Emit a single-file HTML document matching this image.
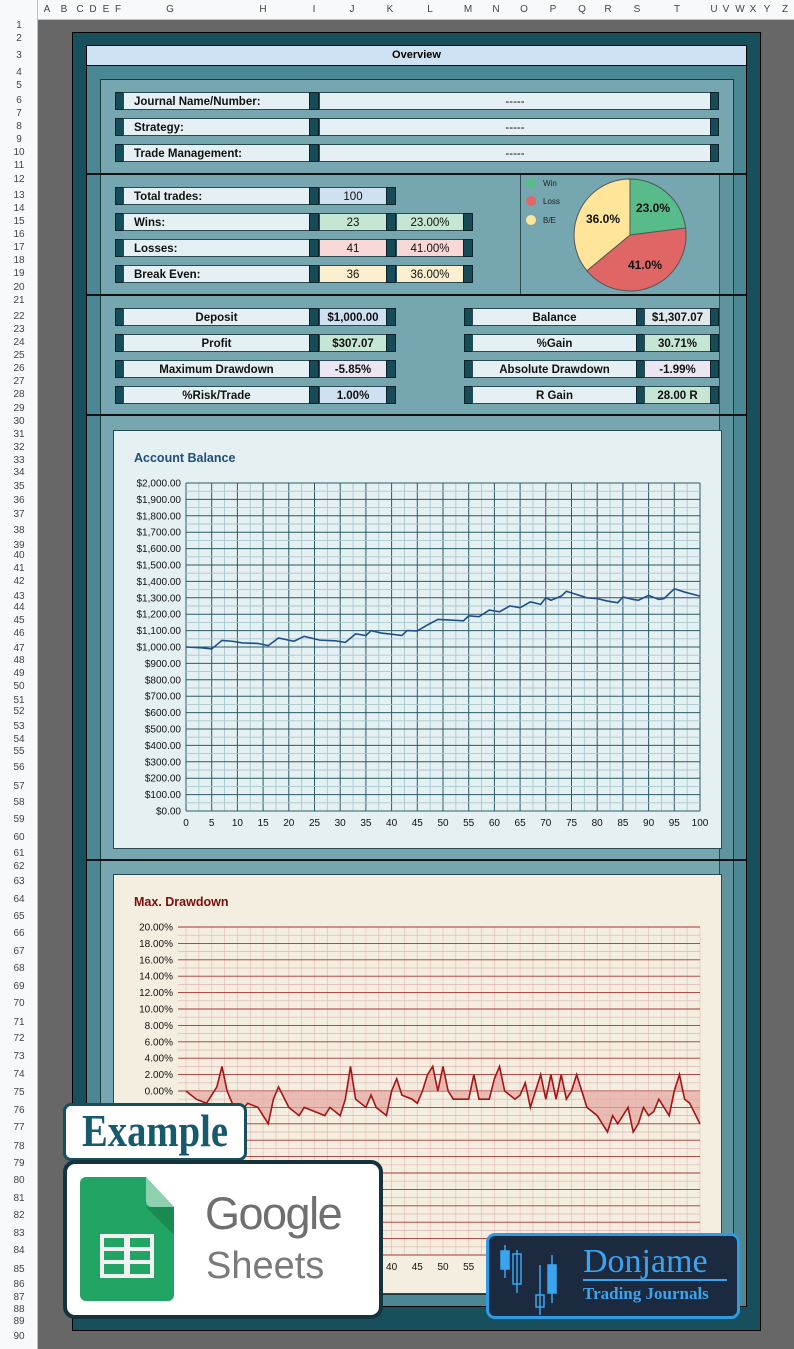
<!DOCTYPE html>
<html><head><meta charset="utf-8"><style>
*{margin:0;padding:0;box-sizing:border-box}
body{width:794px;height:1349px;position:relative;overflow:hidden;background:#676767;font-family:"Liberation Sans",Arial,sans-serif}
.a{position:absolute}
.rh{position:absolute;left:0;width:38px;text-align:center;font-size:10px;color:#444}
.ch{position:absolute;top:4px;font-size:10px;color:#444;transform:translateX(-50%)}
.d{position:absolute;background:#164b58;border:1px solid #0c2228}
.c{position:absolute;border:1px solid #2a4a52;font-size:11.5px;font-weight:bold;color:#111;height:18px;line-height:16px;padding-top:1px;text-align:center;white-space:nowrap}
.l{text-align:left;padding-left:10px}
</style></head><body>
<div class="a" style="left:0;top:0;width:794px;height:20px;background:#f8f9fa;border-bottom:1px solid #c0c0c0"></div>
<div class="a" style="left:0;top:0;width:38px;height:1349px;background:#f8f9fa;border-right:1px solid #c0c0c0"></div>
<div class="ch" style="left:47px">A</div><div class="ch" style="left:64px">B</div><div class="ch" style="left:80px">C</div><div class="ch" style="left:93px">D</div><div class="ch" style="left:106px">E</div><div class="ch" style="left:118px">F</div><div class="ch" style="left:170px">G</div><div class="ch" style="left:263px">H</div><div class="ch" style="left:314px">I</div><div class="ch" style="left:352px">J</div><div class="ch" style="left:390px">K</div><div class="ch" style="left:430px">L</div><div class="ch" style="left:468px">M</div><div class="ch" style="left:496px">N</div><div class="ch" style="left:524px">O</div><div class="ch" style="left:553px">P</div><div class="ch" style="left:582px">Q</div><div class="ch" style="left:608px">R</div><div class="ch" style="left:637px">S</div><div class="ch" style="left:677px">T</div><div class="ch" style="left:714px">U</div><div class="ch" style="left:726px">V</div><div class="ch" style="left:740px">W</div><div class="ch" style="left:753px">X</div><div class="ch" style="left:767px">Y</div><div class="ch" style="left:785px">Z</div>
<div id="rows"></div>
<script>
var ys=[26,39,56,73,86,101,114,127,140,153,166,180,196,209,222,235,248,261,274,288,301,317,330,343,356,369,382,395,409,422,435,448,461,473,487,501,515,531,546,556,569,582,597,608,621,634,649,661,674,687,701,712,727,740,752,768,787,803,820,838,854,867,882,900,917,934,952,969,987,1004,1023,1039,1057,1075,1093,1111,1128,1147,1164,1181,1199,1216,1234,1251,1270,1285,1298,1310,1322,1337];
var h='';ys.forEach(function(y,i){h+='<div class="rh" style="top:'+(y-6)+'px">'+(i+1)+'</div>'});document.getElementById('rows').innerHTML=h;
</script>
<div class="a" style="left:72px;top:32px;width:689px;height:1299px;background:#174f5d;border:1px solid #000"></div>
<div class="a" style="left:86px;top:45px;width:661px;height:1262px;background:#4c8794;border:1px solid #000"></div>
<div class="a" style="left:87px;top:46px;width:659px;height:20px;background:#cfe2f3;border-bottom:1px solid #000;font-size:11px;font-weight:bold;text-align:center;line-height:19px">Overview</div>
<div class="a" style="left:100px;top:79px;width:634px;height:1216px;background:#76a6b0;border:1px solid #1a3a40"></div>
<div class="a" style="left:719px;top:174px;width:14px;height:1120px;background:#5f939e;border-left:1px solid #2a4a52"></div>
<div class="a" style="left:87px;top:173px;width:659px;height:2px;background:#111"></div>
<div class="a" style="left:87px;top:294px;width:659px;height:2px;background:#111"></div>
<div class="a" style="left:87px;top:414px;width:659px;height:2px;background:#111"></div>
<div class="a" style="left:87px;top:859px;width:659px;height:2px;background:#111"></div>
<div class="a" style="left:520px;top:175px;width:1px;height:119px;background:#2a4a52"></div>
<div id="cells"></div>
<script>
function row(y,lab,val){return '<div class="d" style="left:115px;top:'+y+'px;width:9px;height:18px"></div><div class="c l" style="left:123px;top:'+y+'px;width:187px;background:#e4f0f3">'+lab+'</div><div class="d" style="left:309px;top:'+y+'px;width:10px;height:18px"></div><div class="c" style="left:319px;top:'+y+'px;width:392px;background:#e4f0f3;font-weight:normal">'+val+'</div><div class="d" style="left:710px;top:'+y+'px;width:9px;height:18px"></div>'}
function srow(y,lab,v,bg,p,pbg){var s='<div class="d" style="left:115px;top:'+y+'px;width:9px;height:18px"></div><div class="c l" style="left:123px;top:'+y+'px;width:187px;background:#e4f0f3">'+lab+'</div><div class="d" style="left:309px;top:'+y+'px;width:10px;height:18px"></div><div class="c" style="left:319px;top:'+y+'px;width:68px;background:'+bg+';font-weight:normal">'+v+'</div><div class="d" style="left:386px;top:'+y+'px;width:10px;height:18px"></div>';if(p)s+='<div class="c" style="left:396px;top:'+y+'px;width:68px;background:'+pbg+';font-weight:normal">'+p+'</div><div class="d" style="left:463px;top:'+y+'px;width:10px;height:18px"></div>';return s}
function mrow(y,lab,v,bg,lab2,v2,bg2){return '<div class="d" style="left:115px;top:'+y+'px;width:9px;height:18px"></div><div class="c" style="left:123px;top:'+y+'px;width:187px;background:#e4f0f3">'+lab+'</div><div class="d" style="left:309px;top:'+y+'px;width:10px;height:18px"></div><div class="c" style="left:319px;top:'+y+'px;width:68px;background:'+bg+'">'+v+'</div><div class="d" style="left:386px;top:'+y+'px;width:10px;height:18px"></div>'+
'<div class="d" style="left:464px;top:'+y+'px;width:9px;height:18px"></div><div class="c" style="left:472px;top:'+y+'px;width:165px;background:#e4f0f3">'+lab2+'</div><div class="d" style="left:636px;top:'+y+'px;width:9px;height:18px"></div><div class="c" style="left:644px;top:'+y+'px;width:67px;background:'+bg2+'">'+v2+'</div><div class="d" style="left:710px;top:'+y+'px;width:9px;height:18px"></div>'}
var s=row(92,'Journal Name/Number:','-----')+row(118,'Strategy:','-----')+row(144,'Trade Management:','-----');
s+=srow(187,'Total trades:','100','#cfe0f3')+srow(213,'Wins:','23','#c5e6d2','23.00%','#c5e6d2')+srow(239,'Losses:','41','#f8d7d7','41.00%','#f8d7d7')+srow(265,'Break Even:','36','#fcefcf','36.00%','#fcefcf');
s+=mrow(308,'Deposit','$1,000.00','#cfe0f3','Balance','$1,307.07','#dfe8ec')+mrow(334,'Profit','$307.07','#c5e6d2','%Gain','30.71%','#c5e6d2')+mrow(360,'Maximum Drawdown','-5.85%','#ece6f3','Absolute Drawdown','-1.99%','#ece6f3')+mrow(386,'%Risk/Trade','1.00%','#cfe0f3','R Gain','28.00 R','#c5e6d2');
document.getElementById('cells').innerHTML=s;
</script>
<div class="a" style="left:113px;top:430px;width:609px;height:419px;background:#e5f0f3;border:1px solid #2a4a52"></div>
<div class="a" style="left:113px;top:874px;width:609px;height:420px;background:#f3eee0;border:1px solid #2a4a52"></div>
<svg class="a" style="left:0;top:0" width="794" height="1349" id="sv" font-family="Liberation Sans, Arial, sans-serif">
<text x="134" y="462" font-size="12.5" font-weight="bold" fill="#1f4e79">Account Balance</text>
<text x="134" y="906" font-size="12.5" font-weight="bold" fill="#7a0c0c">Max. Drawdown</text>
<g font-size="10.5" fill="#222">
<circle cx="531" cy="183" r="5" fill="#57bb8a"/><text x="543" y="186" font-size="8">Win</text>
<circle cx="531" cy="201" r="5" fill="#e06666"/><text x="543" y="204" font-size="8">Loss</text>
<circle cx="531" cy="220" r="5" fill="#ffe599"/><text x="543" y="223" font-size="8">B/E</text>
</g>
<g stroke="#555" stroke-width="1">
<path d="M630 235 L630 179 A56 56 0 0 1 685.6 228 Z" fill="#57bb8a"/>
<path d="M630 235 L685.6 228 A56 56 0 0 1 586.9 270.7 Z" fill="#e06666"/>
<path d="M630 235 L586.9 270.7 A56 56 0 0 1 630 179 Z" fill="#ffe599"/>
</g>
<g font-size="12" font-weight="bold" fill="#111"><text x="636" y="212">23.0%</text><text x="628" y="269">41.0%</text><text x="586" y="223">36.0%</text></g>
<g id="c1"></g><g id="c2"></g>
</svg>
<script>
var g='',X0=186,X1=700,sx=(X1-X0)/100;
for(var i=0;i<=40;i++){var x=X0+i*2.5*sx;g+='<line x1="'+x+'" y1="483" x2="'+x+'" y2="811" stroke="'+(i%2==0?'#2a5b66':'#a9c8ce')+'" stroke-width="'+(i%2==0?1:0.9)+'"/>';}
for(var j=0;j<=40;j++){var y=483+j*8.2;g+='<line x1="186" y1="'+y+'" x2="700" y2="'+y+'" stroke="'+(j%2==0?'#2a5b66':'#a9c8ce')+'" stroke-width="'+(j%2==0?1:0.9)+'"/>';}
for(var j=0;j<=20;j++){var y=483+j*16.4,v=2000-j*100;g+='<text x="181" y="'+(y+3.5)+'" font-size="10" text-anchor="end" fill="#111">$'+v.toLocaleString('en-US')+'.00</text>';}
for(var i=0;i<=100;i+=5){g+='<text x="'+(X0+i*sx)+'" y="826" font-size="10" text-anchor="middle" fill="#111">'+i+'</text>';}
var b=[[0,1000],[3,995],[5,988],[7,1040],[9,1035],[11,1025],[14,1022],[16,1008],[18,1055],[21,1035],[23,1065],[26,1042],[29,1038],[31,1028],[33,1080],[35,1070],[36,1100],[38,1085],[40,1078],[42,1070],[43,1100],[45,1098],[47,1135],[49,1168],[51,1165],[54,1160],[55,1190],[57,1185],[59,1225],[61,1215],[63,1250],[65,1240],[67,1275],[69,1260],[70,1300],[71,1285],[73,1310],[74,1340],[76,1320],[78,1300],[80,1295],[82,1280],[84,1270],[85,1305],[87,1290],[88,1285],[90,1315],[92,1290],[93,1295],[95,1355],[97,1335],[100,1310]];
g+='<polyline fill="none" stroke="#1f4e8c" stroke-width="1.6" points="'+b.map(function(p){return (X0+p[0]*sx)+','+(811-p[1]*0.164)}).join(' ')+'"/>';
document.getElementById('c1').innerHTML=g;
var h='';var Y0=1091;
for(var i=0;i<=40;i++){var x=X0+i*2.5*sx;h+='<line x1="'+x+'" y1="927" x2="'+x+'" y2="1255" stroke="#e6c4c0" stroke-width="0.8"/>';}
for(var j=0;j<=40;j++){var y=927+j*8.2;h+='<line x1="178" y1="'+y+'" x2="700" y2="'+y+'" stroke="'+(j%2==0?'#a33':'#e3b3b3')+'" stroke-width="'+(j%2==0?0.9:0.7)+'"/>';}
for(var j=0;j<=10;j++){var y=927+j*16.4;h+='<text x="173" y="'+(y+3.5)+'" font-size="10" text-anchor="end" fill="#111">'+(20-j*2).toFixed(2)+'%</text>';}
for(var i=0;i<=100;i+=5){h+='<text x="'+(X0+i*sx)+'" y="1270" font-size="10" text-anchor="middle" fill="#111">'+i+'</text>';}
var d=[[0,0],[2,-1],[4,-1.5],[6,0.5],[7,3],[8,0],[10,-3],[12,-1.5],[14,-2],[16,-4],[17,-1],[18,0.5],[20,-2],[22,-3],[23,-2],[25,-2.5],[27,-3],[28,-2],[30,-3],[31,-1],[32,3],[33,-1],[35,-2],[36,-0.5],[37,-2],[39,-3],[40,0],[41,1.5],[42,-0.5],[44,-1],[45,-1.5],[46,0],[47,2],[48,3],[49,0],[50,3],[51,0],[52,-1],[53,-1],[55,-1],[56,2],[57,-1],[59,-1],[60,1.5],[61,3],[62,0],[64,-1],[65,-0.5],[66,1],[67,-2],[68,0],[69,2],[70,-1],[71,2],[72,-1],[73,2],[74,-1],[75,0],[76,2],[78,-2],[80,-3],[81,-4],[82,-5],[83,-3],[84,-4],[86,-2],[87,-5],[88,-4],[89,-2],[90,-3],[91,-2.5],[92,-1],[94,-3],[95,0],[96,2],[97,-1],[98,-1.5],[100,-4]];
var pts=d.map(function(p){return (X0+p[0]*sx)+','+(Y0-p[1]*8.2)});
h+='<polygon fill="#e7a9a4" opacity="0.75" points="'+X0+','+Y0+' '+pts.join(' ')+' '+X1+','+Y0+'"/>';
h+='<polyline fill="none" stroke="#a31515" stroke-width="1.6" points="'+pts.join(' ')+'"/>';
document.getElementById('c2').innerHTML=h;
</script>
<div class="a" style="left:63px;top:1103px;width:184px;height:58px;background:#fff;border:3px solid #174f5d;border-radius:8px;overflow:hidden;text-align:center"><div style="font-family:'Liberation Serif',serif;font-weight:bold;font-size:46px;color:#175a6e;line-height:50px;transform:scaleX(0.84);white-space:nowrap;margin:0 -20px">Example</div></div>
<div class="a" style="left:63px;top:1160px;width:320px;height:159px;background:#fff;border:4px solid #15323d;border-radius:12px"></div>
<svg class="a" style="left:80px;top:1177px" width="96" height="126" viewBox="0 0 96 126">
<path d="M6 0 H66 L94 30 V118 a6 6 0 0 1-6 6 H6 a6 6 0 0 1-6-6 V6 a6 6 0 0 1 6-6Z" fill="#21a464"/>
<path d="M66 0 L94 30 H72 a6 6 0 0 1-6-6Z" fill="#8ed1b1"/>
<path d="M66 30 L94 58 V30Z" fill="#188a52"/>
<rect x="20" y="57" width="54" height="44" fill="#f1f1f1"/>
<g fill="#21a464"><rect x="24" y="61" width="20" height="9"/><rect x="50" y="61" width="20" height="9"/><rect x="24" y="74" width="20" height="9"/><rect x="50" y="74" width="20" height="9"/><rect x="24" y="87" width="20" height="10"/><rect x="50" y="87" width="20" height="10"/></g>
</svg>
<div class="a" style="left:205px;top:1188px;font-size:45px;color:#6f6f6f;letter-spacing:-1.5px">Google</div>
<div class="a" style="left:206px;top:1245px;font-size:38px;color:#7a7a7a">Sheets</div>
<div class="a" style="left:486px;top:1233px;width:254px;height:86px;background:#1b2a3f;border:3px solid #2e9be6;border-radius:9px"></div>
<svg class="a" style="left:495px;top:1245px" width="75" height="72" stroke="#3aa5ee" fill="#3aa5ee" stroke-width="1.5">
<line x1="10" y1="0" x2="10" y2="33"/><rect x="6" y="6" width="8" height="18"/>
<line x1="22" y1="5" x2="22" y2="48"/><rect x="18" y="9" width="8" height="30" fill="none"/>
<line x1="45" y1="20" x2="45" y2="70"/><rect x="41" y="50" width="8" height="12" fill="none"/>
<line x1="57" y1="10" x2="57" y2="58"/><rect x="53" y="20" width="8" height="28"/>
</svg>
<div class="a" style="left:583px;top:1242px;font-family:'Liberation Serif',serif;font-size:34px;color:#3aa5ee;line-height:40px">Donjame</div>
<div class="a" style="left:583px;top:1279px;width:144px;height:2px;background:#3aa5ee"></div>
<div class="a" style="left:583px;top:1284px;font-family:'Liberation Serif',serif;font-size:17px;font-weight:bold;color:#3aa5ee">Trading Journals</div>
</body></html>
